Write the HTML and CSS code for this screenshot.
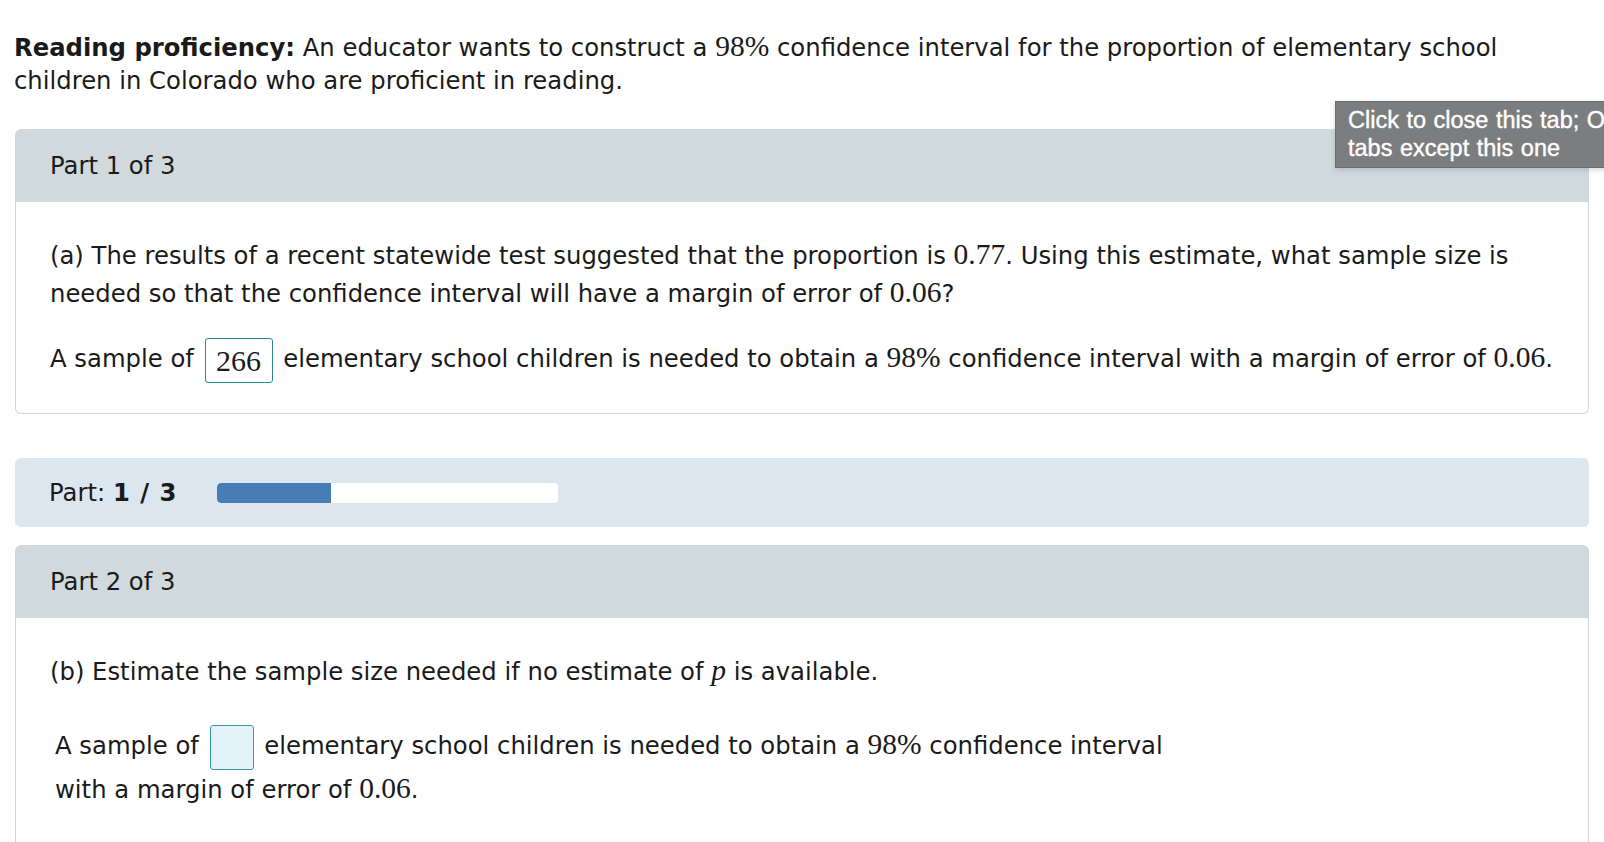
FILE: index.html
```html
<!DOCTYPE html>
<html lang="en">
<head>
<meta charset="utf-8">
<title>Reading proficiency</title>
<link rel="stylesheet" href="styles.css">
</head>
<body>
<div class="page">
  <p class="intro"><strong>Reading proficiency:</strong> An educator wants to construct a <span class="m">98%</span> confidence interval for the proportion of elementary school children in Colorado who are proficient in reading.</p>

  <section class="part">
    <div class="part-head">Part 1 of 3</div>
    <div class="part-body">
      <p class="q">(a) The results of a recent statewide test suggested that the proportion is <span class="m">0.77</span>. Using this estimate, what sample size is needed so that the confidence interval will have a margin of error of <span class="m">0.06</span>?</p>
      <p class="ans">A sample of <span class="box filled">266</span> elementary school children is needed to obtain a <span class="m">98%</span> confidence interval with a margin of error of <span class="m">0.06</span>.</p>
    </div>
  </section>

  <div class="progress">
    <span class="progress-label">Part: <b>1 / 3</b></span>
    <div class="bar"><div class="bar-fill" style="width:33.3%"></div></div>
  </div>

  <section class="part part-two">
    <div class="part-head">Part 2 of 3</div>
    <div class="part-body">
      <p class="q">(b) Estimate the sample size needed if no estimate of <span class="m i">p</span> is available.</p>
      <p class="ans ans-open">A sample of <span class="box empty"></span> elementary school children is needed to obtain a <span class="m">98%</span> confidence interval with a margin of error of <span class="m">0.06</span>.</p>
    </div>
  </section>
</div>

<div class="tooltip">Click to close this tab; Option-click to close all<br>tabs except this one</div>
</body>
</html>
```

FILE: styles.css
```css
html, body {
  overflow: hidden;
}

body {
  margin: 0;
  font-family: "DejaVu Sans", Verdana, sans-serif;
  font-size: 24.3px;
  color: #1a1a1a;
  background: #ffffff;
}

.page {
  padding: 31px 15px 0 15px;
}

.intro {
  margin: 0 0 32px -1px;
  line-height: 33px;
}

.intro strong {
  font-weight: bold;
}

.m {
  font-family: "Liberation Serif", "Times New Roman", serif;
  font-size: 29.5px;
  line-height: 0;
}

.m.i {
  font-style: italic;
}

.part {
  border-radius: 6px;
}

.part-head {
  height: 73px;
  display: flex;
  align-items: center;
  padding-left: 35px;
  background: #d0dadd;
  border-radius: 6px 6px 0 0;
}

.part-body {
  border: 1px solid #cfd9dd;
  border-top: 0;
  border-radius: 0 0 6px 6px;
  padding: 35px 16px 31px 34px;
}

.q {
  margin: 0;
  line-height: 38px;
}

.ans {
  margin: 23px 0 0 0;
  line-height: 46px;
}

.box {
  display: inline-block;
  box-sizing: border-box;
  height: 45px;
  vertical-align: middle;
  border: 1px solid #2a8897;
  border-radius: 3px;
  margin: -8px 3px;
}

.box.filled {
  width: 68px;
  font-family: "Liberation Serif", "Times New Roman", serif;
  font-size: 30px;
  line-height: 43px;
  text-align: center;
}

.box.empty {
  width: 44px;
  background: #e4f3f8;
  border-color: #3a98a6;
}

.progress {
  margin-top: 44px;
  height: 69px;
  display: flex;
  align-items: center;
  gap: 40px;
  padding-left: 34px;
  background: #dbe6ef;
  border-radius: 6px;
}

.progress-label b {
  font-weight: bold;
  letter-spacing: 1px;
}

.bar {
  width: 341px;
  height: 20px;
  background: #ffffff;
  border-radius: 4px;
  overflow: hidden;
}

.bar-fill {
  height: 100%;
  background: #467db5;
  border-radius: 4px 0 0 4px;
}

.part-two {
  margin-top: 18px;
}

.part-two .part-body {
  padding-bottom: 60px;
}

.ans-open {
  margin-top: 33px;
  padding-left: 5px;
  max-width: 1140px;
  line-height: 44px;
}

.tooltip {
  position: absolute;
  top: 101px;
  left: 1335px;
  padding: 4px 12px 5px 12px;
  background: #7b7d7e;
  border: 1px solid #6b6d6e;
  color: #ffffff;
  font-family: "Liberation Sans", Arial, sans-serif;
  font-size: 23.5px;
  line-height: 28px;
  word-spacing: 1px;
  white-space: nowrap;
  -webkit-text-stroke: 0.4px #ffffff;
  box-shadow: 0 2px 6px rgba(0, 0, 0, 0.15);
}
```
